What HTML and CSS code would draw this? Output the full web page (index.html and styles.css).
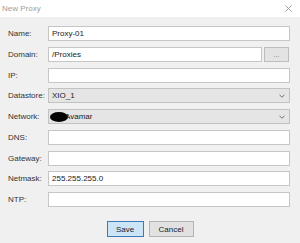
FILE: index.html
```html
<!DOCTYPE html>
<html>
<head>
<meta charset="utf-8">
<link rel="stylesheet" href="styles.css">
</head>
<body>
<div class="window">
  <div class="titlebar">
    <span class="title">New Proxy</span>
    <svg class="close" width="7" height="7" viewBox="0 0 7 7"><path d="M0.5 0.5L6.5 6.5M6.5 0.5L0.5 6.5" stroke="#9a9a9a" stroke-width="0.9"/></svg>
  </div>
  <div class="content">
    <div class="form">
      <label class="lbl">Name:</label>
      <div class="field input">Proxy-01</div>

      <label class="lbl">Domain:</label>
      <div class="domain-row">
        <div class="field input grow">/Proxies</div>
        <div class="browse">...</div>
      </div>

      <label class="lbl">IP:</label>
      <div class="field input"></div>

      <label class="lbl">Datastore:</label>
      <div class="field select">XIO_1<svg class="chev" width="6" height="4" viewBox="0 0 6 4"><path d="M0.5 0.8L3 3.2L5.5 0.8" fill="none" stroke="#666" stroke-width="0.9"/></svg></div>

      <label class="lbl">Network:</label>
      <div class="field select net"><span class="blob"></span><span class="nettext">Avamar</span><svg class="chev" width="6" height="4" viewBox="0 0 6 4"><path d="M0.5 0.8L3 3.2L5.5 0.8" fill="none" stroke="#666" stroke-width="0.9"/></svg></div>

      <label class="lbl">DNS:</label>
      <div class="field input"></div>

      <label class="lbl">Gateway:</label>
      <div class="field input"></div>

      <label class="lbl">Netmask:</label>
      <div class="field input">255.255.255.0</div>

      <label class="lbl">NTP:</label>
      <div class="field input"></div>
    </div>
    <div class="buttons">
      <div class="btn primary">Save</div>
      <div class="btn">Cancel</div>
    </div>
  </div>
</div>
</body>
</html>
```

FILE: styles.css
```css
html, body {
  margin: 0;
  padding: 0;
}
body {
  width: 300px;
  height: 243px;
  overflow: hidden;
  background: #f0f0f0;
  font-family: "Liberation Sans", Arial, sans-serif;
  font-size: 8px;
  color: #222;
}
.window {
  width: 300px;
  height: 243px;
  display: flex;
  flex-direction: column;
}
.titlebar {
  height: 17px;
  background: #ffffff;
  display: flex;
  align-items: center;
  justify-content: space-between;
  padding: 0 8px 0 2px;
  box-sizing: border-box;
  flex: none;
}
.title {
  color: #9d9d9d;
  font-size: 8px;
}
.close {
  display: block;
}
.content {
  padding: 9px 10px 0 8px;
  display: flex;
  flex-direction: column;
}
.form {
  display: grid;
  grid-template-columns: 40px 1fr;
  row-gap: 5.75px;
  align-items: center;
}
.lbl {
  color: #333;
  font-size: 8px;
}
.field {
  height: 15px;
  box-sizing: border-box;
  display: flex;
  align-items: center;
  padding-left: 3px;
  font-size: 8px;
  color: #1a1a1a;
}
.input {
  background: #fff;
  border: 1px solid #c6c6c6;
}
.domain-row {
  display: flex;
  gap: 2px;
  align-items: center;
}
.grow {
  flex: 1;
}
.browse {
  width: 25px;
  height: 15px;
  box-sizing: border-box;
  background: #e3e3e3;
  border: 1px solid #bdbdbd;
  color: #777;
  font-size: 7px;
  display: flex;
  align-items: center;
  justify-content: center;
  margin-right: 1px;
}
.select {
  background: #e5e5e5;
  border: 1px solid #c2c2c2;
  position: relative;
}
.chev {
  position: absolute;
  right: 4px;
  top: 5px;
}
.net {
  position: relative;
}
.nettext {
  padding-left: 13px;
}
.blob {
  position: absolute;
  left: 1px;
  top: 2px;
  width: 18px;
  height: 10px;
  border-radius: 50%;
  background: #050505;
}
.buttons {
  display: flex;
  justify-content: center;
  gap: 5px;
  margin-top: 14px;
  padding-left: 2px;
}
.btn {
  height: 16px;
  width: 45px;
  box-sizing: border-box;
  background: #e1e1e1;
  border: 1px solid #b4b4b4;
  display: flex;
  align-items: center;
  justify-content: center;
  font-size: 8px;
  color: #222;
}
.btn.primary {
  width: 37px;
  background: #cce4f7;
  border: 1px solid #3d7ab5;
}
```
